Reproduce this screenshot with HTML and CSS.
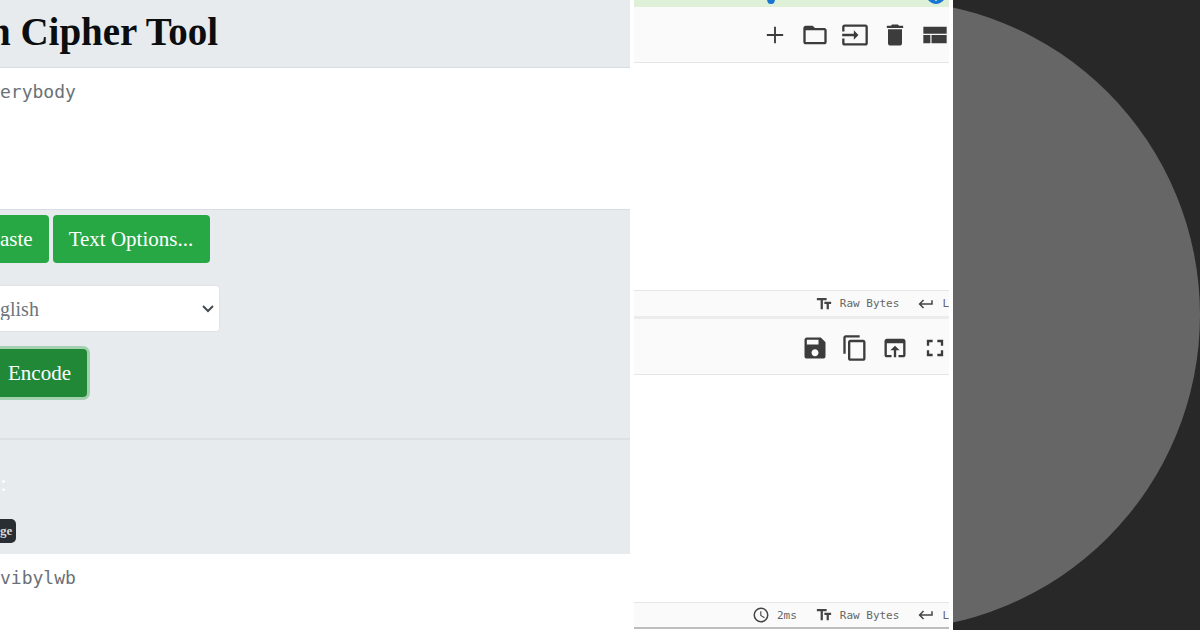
FILE: index.html
```html
<!DOCTYPE html>
<html lang="en">
<head>
    <meta charset="UTF-8">
    <meta name="viewport" content="width=device-width, initial-scale=1.0">
    <title>Cipher Tool</title>
    <link rel="stylesheet" href="styles.css">
</head>
<body>
    <div class="page">
        <!-- Cipher form -->
        <section class="cipher">
            <h1>n Cipher Tool</h1>
            <textarea class="text-area message" aria-label="Message" spellcheck="false">erybody</textarea>
            <div class="buttons">
                <button type="button" class="btn btn-cut">aste</button>
                <button type="button" class="btn">Text Options...</button>
            </div>
            <select class="language" aria-label="Language">
                <option>glish</option>
            </select>
            <button type="button" class="btn btn-encode">Encode</button>
            <hr>
            <p class="result-label">:</p>
            <span class="badge">ge</span>
            <textarea class="text-area result" aria-label="Result" spellcheck="false">vibylwb</textarea>
        </section>

        <!-- Input and output panes -->
        <section class="panes">
            <div class="banner">
                <svg class="banner-gear" viewBox="0 0 10 5"><path d="M1 0h8L8 3Q7 4 5 4T2 3z"/></svg>
                <svg class="banner-help" viewBox="0 0 18 5"><path d="M1 0q8 8 16 0z"/><circle cx="9" cy="0" r="1" fill="#dff0d8"/></svg>
            </div>
            <div class="toolbar">
                <button type="button" aria-label="Add tab"><svg viewBox="0 0 24 24"><path d="M19 12.8h-6.2V19h-1.6v-6.200H5v-1.600h6.200V5h1.600v6.200H19z"/></svg></button>
                <button type="button" aria-label="Open folder"><svg viewBox="0 0 24 24"><path d="M20 6h-8l-2-2H4c-1.100 0-2 .9-2 2v12c0 1.100.9 2 2 2h16c1.100 0 2-.9 2-2V8c0-1.100-.9-2-2-2zm0 12H4V8h16v10z"/></svg></button>
                <button type="button" aria-label="Open file"><svg viewBox="0 0 24 24"><path d="M21 3H3c-1.100 0-2 .9-2 2v4h2V5h18v14H3v-4H1v4c0 1.100.9 2 2 2h18c1.100 0 2-.9 2-2V5c0-1.100-.9-2-2-2zM11 16l4-4-4-4v3H1v2h10v3z"/></svg></button>
                <button type="button" aria-label="Clear"><svg viewBox="0 0 24 24"><path d="M6 19c0 1.100.9 2 2 2h8c1.100 0 2-.9 2-2V7H6v12zM19 4h-3.500l-1-1h-5l-1 1H5v2h14V4z"/></svg></button>
                <button type="button" aria-label="Reset layout"><svg viewBox="0 0 24 24"><path d="M2 19h6v-7H2v7zm7 0h13v-7H9v7zM2 5v6h20V5H2z"/></svg></button>
            </div>
            <div class="pane"></div>
            <div class="status">
                <span><svg viewBox="0 0 24 24"><path d="M2.500 4v3h5v12h3V7h5V4h-13zm19 5h-9v3h3v7h3v-7h3V9z"/></svg>Raw Bytes</span>
                <span><svg viewBox="0 0 24 24"><path d="M19 7v4H5.830l3.580-3.590L8 6l-6 6 6 6 1.410-1.410L5.830 13H21V7z"/></svg>L</span>
            </div>
            <div class="toolbar toolbar-output">
                <button type="button" aria-label="Save"><svg viewBox="0 0 24 24"><path d="M17 3H5c-1.110 0-2 .9-2 2v14c0 1.100.89 2 2 2h14c1.100 0 2-.9 2-2V7l-4-4zm-5 16c-1.660 0-3-1.340-3-3s1.340-3 3-3 3 1.340 3 3-1.340 3-3 3zm3-10H5V5h10v4z"/></svg></button>
                <button type="button" aria-label="Copy"><svg viewBox="0 0 24 24"><path d="M16 1H4c-1.100 0-2 .9-2 2v14h2V3h12V1zm3 4H8c-1.100 0-2 .9-2 2v14c0 1.100.9 2 2 2h11c1.100 0 2-.9 2-2V7c0-1.100-.9-2-2-2zm0 16H8V7h11v14z"/></svg></button>
                <button type="button" aria-label="Move to input"><svg viewBox="0 0 24 24"><path d="M19 4H5c-1.110 0-2 .9-2 2v12c0 1.100.89 2 2 2h4v-2H5V8h14v10h-4v2h4c1.100 0 2-.9 2-2V6c0-1.100-.89-2-2-2zm-7 6l-4 4h3v6h2v-6h3l-4-4z"/></svg></button>
                <button type="button" aria-label="Maximise"><svg viewBox="0 0 24 24"><path d="M7 14H5v5h5v-2H7v-3zm-2-4h2V7h3V5H5v5zm12 7h-3v2h5v-5h-2v3zM14 5v2h3v3h2V5h-5z"/></svg></button>
            </div>
            <div class="pane"></div>
            <div class="status status-last">
                <span><svg viewBox="0 0 24 24"><path d="M12 2a10 10 0 1 0 0 20 10 10 0 0 0 0-20zm0 18a8 8 0 1 1 0-16 8 8 0 0 1 0 16zm.5-13H11v6l5.200 3.200.8-1.300-4.500-2.700V7z"/></svg>2ms</span>
                <span><svg viewBox="0 0 24 24"><path d="M2.500 4v3h5v12h3V7h5V4h-13zm19 5h-9v3h3v7h3v-7h3V9z"/></svg>Raw Bytes</span>
                <span><svg viewBox="0 0 24 24"><path d="M19 7v4H5.830l3.580-3.590L8 6l-6 6 6 6 1.410-1.410L5.830 13H21V7z"/></svg>L</span>
            </div>
        </section>

        <!-- Dark panel with the disc -->
        <section class="disc-panel">
            <div class="disc"></div>
        </section>
    </div>
</body>
</html>
```
FILE: styles.css
```css
* {
    box-sizing: border-box;
}
body {
    margin: 0;
    background-color: #fff;
    font-family: "Liberation Serif", serif;
}
.page {
    display: grid;
    grid-template-columns: 630fr 315fr 247fr;
    gap: 4px;
    height: 100vh;
}
.page > section {
    min-width: 0;
    overflow: hidden;
}

/* Cipher form */
.cipher {
    display: flex;
    flex-direction: column;
    align-items: flex-start;
    background-color: #e7ebee;
}
h1 {
    display: flex;
    justify-content: flex-end;
    width: 218px;
    margin: 0;
    padding: 10px 0 13px;
    font-size: 39px;
    line-height: 44px;
    color: #0b0d0f;
    white-space: nowrap;
}
.text-area {
    display: block;
    width: 100%;
    padding: 12px 0;
    border: 0;
    border-top: 1px solid #d8dde3;
    font-family: "DejaVu Sans Mono", monospace;
    font-size: 18px;
    line-height: 24px;
    color: #6a7177;
    background-color: #fff;
    resize: none;
    outline: none;
}
.message {
    height: 143px;
    border-bottom: 1px solid #d8dde3;
}
.buttons {
    display: flex;
    gap: 4px;
    padding: 5px 0 22px;
}
.btn {
    height: 48px;
    padding: 0 17px 0 16px;
    border: 0;
    border-radius: 4px;
    font-family: inherit;
    font-size: 21px;
    color: #fff;
    background-color: #28a745;
    cursor: pointer;
}
.btn-cut {
    padding: 0 16px 0 0;
    border-radius: 0 4px 4px 0;
}
.language {
    width: 220px;
    height: 47px;
    padding: 0;
    border: 1px solid #dfe3e8;
    border-left: 0;
    border-radius: 0 4px 4px 0;
    font-family: inherit;
    font-size: 20px;
    color: #6c757d;
    appearance: none;
    background: #fff url("data:image/svg+xml,%3Csvg xmlns='http://www.w3.org/2000/svg' viewBox='0 0 12 8'%3E%3Cpath d='M1 1l5 5 5-5' fill='none' stroke='%23454b50' stroke-width='2'/%3E%3C/svg%3E") no-repeat right 5px center / 12px 8px;
}
.btn-encode {
    margin-top: 17px;
    padding: 0 16px 0 8px;
    border-radius: 0 4px 4px 0;
    background-color: #218838;
    box-shadow: 0 0 0 3px #a3d1b0;
}
hr {
    width: 100%;
    margin: 41px 0 0;
    border: 0;
    border-top: 2px solid #dce0e4;
}
.result-label {
    margin: 0;
    padding: 31px 0 24px;
    font-size: 24px;
    line-height: 24px;
    color: #fff;
}
.badge {
    height: 24px;
    padding: 0 4px 0 0;
    border-radius: 0 5px 5px 0;
    font-size: 13px;
    line-height: 24px;
    font-weight: bold;
    color: #d6d9dc;
    background-color: #292e33;
}
.result {
    flex: 1;
    margin-top: 11px;
    border-top: 0;
}

/* Input and output panes */
.panes {
    display: flex;
    flex-direction: column;
}
.banner {
    display: flex;
    justify-content: flex-end;
    flex-shrink: 0;
    gap: 151px;
    height: 7px;
    padding-right: 4px;
    background-color: #dff0d8;
}
.banner svg {
    height: 5px;
    fill: #1976d2;
}
.banner-gear {
    width: 10px;
}
.banner-help {
    width: 18px;
}
.toolbar {
    display: flex;
    align-items: center;
    justify-content: flex-end;
    flex-shrink: 0;
    gap: 12px;
    height: 56px;
    background-color: #fafafa;
    border-bottom: 1px solid #e6e6e6;
}
.toolbar button {
    display: flex;
    padding: 0;
    border: 0;
    background: none;
    cursor: pointer;
}
.toolbar svg {
    width: 28px;
    height: 28px;
    fill: #3c3c3c;
}
.pane {
    flex: 1;
    background-color: #fff;
}
.status {
    display: flex;
    align-items: center;
    justify-content: flex-end;
    flex-shrink: 0;
    gap: 18px;
    height: 26px;
    font-family: "DejaVu Sans Mono", monospace;
    font-size: 11px;
    color: #666;
    background-color: #fafafa;
    border-top: 1px solid #e6e6e6;
}
.status span {
    display: flex;
    align-items: center;
    gap: 7px;
    white-space: nowrap;
}
.status svg {
    width: 18px;
    height: 18px;
    fill: #444;
}
.toolbar-output {
    height: 59px;
    padding-top: 2px;
    border-top: 3px solid #ececec;
}
.status-last {
    height: 27px;
    margin-bottom: 1px;
    border-bottom: 2px solid #bdbdbd;
}

/* Dark panel */
.disc-panel {
    display: flex;
    justify-content: flex-end;
    background-color: #282828;
}
.disc {
    flex-shrink: 0;
    height: 100%;
    aspect-ratio: 1;
    border-radius: 50%;
    background-color: #666;
}
```
